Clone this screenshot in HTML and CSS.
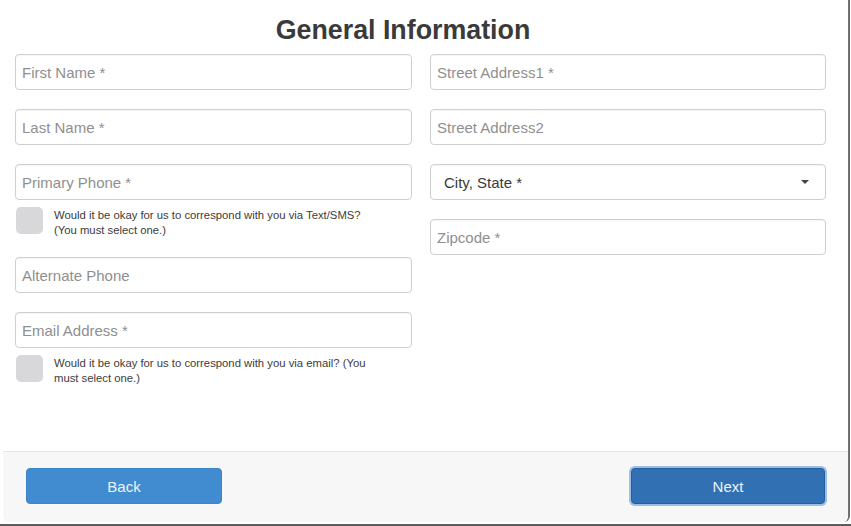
FILE: index.html
```html
<!DOCTYPE html>
<html lang="en">
<head>
<meta charset="utf-8">
<title>General Information</title>
<link rel="stylesheet" href="styles.css">
</head>
<body>
<div class="screen">
  <div class="modal">
    <div class="modal-body">
      <h1 class="title">General Information</h1>
      <div class="columns">
        <div class="col">
          <div class="field"><span class="ph">First Name *</span></div>
          <div class="field"><span class="ph">Last Name *</span></div>
          <div class="field with-check"><span class="ph">Primary Phone *</span></div>
          <div class="check">
            <span class="box"></span>
            <span class="check-text">Would it be okay for us to correspond with you via Text/SMS? (You must select one.)</span>
          </div>
          <div class="field"><span class="ph">Alternate Phone</span></div>
          <div class="field with-check"><span class="ph">Email Address *</span></div>
          <div class="check">
            <span class="box"></span>
            <span class="check-text">Would it be okay for us to correspond with you via email? (You must select one.)</span>
          </div>
        </div>
        <div class="col">
          <div class="field"><span class="ph">Street Address1 *</span></div>
          <div class="field"><span class="ph">Street Address2</span></div>
          <div class="field select"><span class="val">City, State *</span><span class="caret"></span></div>
          <div class="field"><span class="ph">Zipcode *</span></div>
        </div>
      </div>
    </div>
    <div class="modal-footer">
      <button class="btn btn-back">Back</button>
      <button class="btn btn-next">Next</button>
    </div>
  </div>
</div>
</body>
</html>
```
FILE: styles.css
```css
html, body {
  margin: 0;
  padding: 0;
  background: #ffffff;
}

body {
  font-family: "Liberation Sans", Arial, Helvetica, sans-serif;
  width: 851px;
  height: 526px;
  overflow: hidden;
}

.screen {
  height: 524px;
  border-bottom: 2px solid #5c5c5c;
}

.modal {
  margin-left: 3px;
  width: 845px;
  height: 522px;
  border-right: 2px solid #707070;
  display: flex;
  flex-direction: column;
  background: #ffffff;
  border-radius: 0 0 6px 6px;
}

.modal-body {
  flex: 1;
  padding: 0 22px 0 12px;
}

.title {
  margin: 14px 0 8px 0;
  padding-right: 35px;
  font-size: 26.8px;
  line-height: 32px;
  font-weight: bold;
  text-align: center;
  color: #3a3a3a;
}

.columns {
  display: grid;
  grid-template-columns: 397px 396px;
  column-gap: 18px;
}

.col {
  display: flex;
  flex-direction: column;
}

.field {
  height: 36px;
  box-sizing: border-box;
  border: 1px solid #cfcfcf;
  border-radius: 4px;
  margin-bottom: 19px;
  display: flex;
  align-items: center;
  padding-left: 6px;
  font-size: 15px;
  box-shadow: inset 0 1px 1px rgba(0, 0, 0, 0.04);
}

.field.with-check {
  margin-bottom: 7px;
}

.ph {
  color: #8f8f8f;
}

.select {
  padding-left: 13px;
  padding-right: 16px;
  justify-content: space-between;
}

.val {
  color: #3a3a3a;
}

.caret {
  width: 0;
  height: 0;
  border-left: 4px solid transparent;
  border-right: 4px solid transparent;
  border-top: 4px solid #444444;
}

.check {
  display: flex;
  align-items: flex-start;
  height: 27px;
  margin-bottom: 23px;
  padding-left: 1px;
}

.box {
  flex: none;
  width: 27px;
  height: 27px;
  border-radius: 5px;
  background: #d8d8da;
}

.check-text {
  margin-left: 11px;
  margin-top: 1px;
  width: 320px;
  font-size: 11.3px;
  line-height: 15px;
  color: #3c3c3c;
}

.modal-footer {
  height: 71px;
  box-sizing: border-box;
  border-top: 1px solid #e6e6e6;
  background: #f7f7f7;
  border-radius: 0 0 6px 6px;
  display: flex;
  justify-content: space-between;
  align-items: flex-start;
  padding: 16px 22px 0 23px;
}

.btn {
  width: 196px;
  height: 36px;
  border-radius: 4px;
  font-family: "Liberation Sans", Arial, Helvetica, sans-serif;
  font-size: 15px;
  color: #eef4fb;
  cursor: pointer;
}

.btn-back {
  background: #418bd0;
  border: 1px solid #3d84c8;
}

.btn-next {
  width: 194px;
  margin-right: 1px;
  background: #3171b3;
  border: 1px solid #245f9c;
  box-shadow: 0 0 0 2px #9bbde6;
}
```
